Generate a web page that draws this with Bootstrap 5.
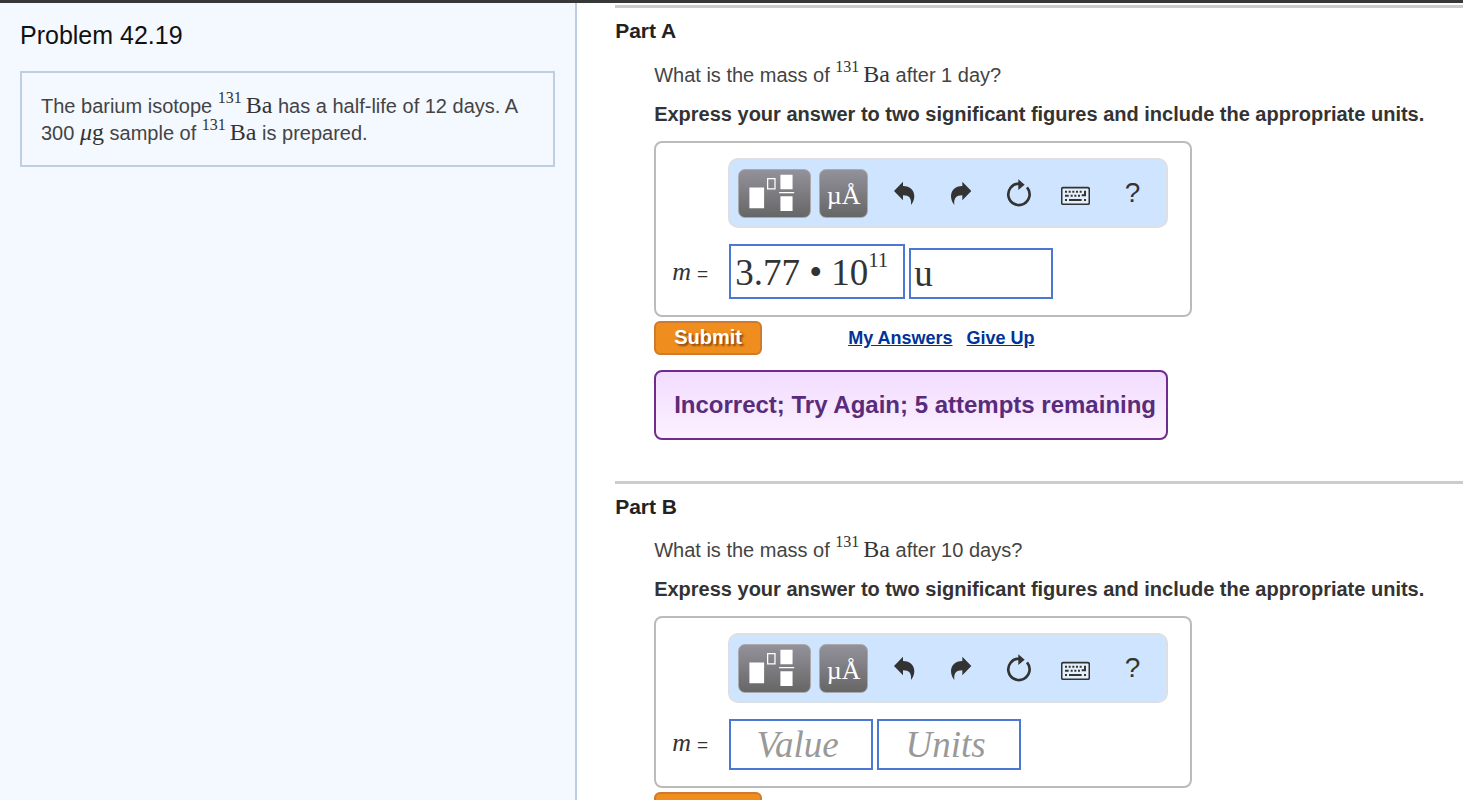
<!DOCTYPE html>
<html lang="en">
<head>
<meta charset="utf-8">
<meta name="viewport" content="width=device-width, initial-scale=1">
<title>Problem 42.19</title>
<link href="https://cdn.jsdelivr.net/npm/bootstrap@5.3.0/dist/css/bootstrap.min.css" rel="stylesheet">
<style>
body { font-family: "Liberation Sans", Arial, sans-serif; font-size: 20px; line-height: 24px; color: #444; background: #fff; }
.shell { border-top: 3px solid #383838; }
.problem-pane { flex: 0 0 auto; width: 39.45%; padding: 18px 20px; background: #f4f8ff; border-right: 2px solid #bccde0; }
.problem-pane h1 { font-size: 25px; line-height: 28px; font-weight: 400; color: #111; margin-bottom: 22px; }
.problem-box { border: 2px solid #bdcfe1; padding: 20px 20px 18px 19px; line-height: 27px; }
.parts-pane { min-width: 0; padding: 2px 0 0 38px; scrollbar-width: none; }
.part { border-top: 3px solid #ccc; padding-top: 11px; }
.part h2 { font-size: 21px; line-height: 24px; font-weight: 700; color: #222; margin-bottom: 20px; }
.part-body { padding-left: 39px; }
.part-body p { margin-bottom: 15px; }
.part-body .instruct { font-weight: 700; color: #333; }
.iso { font-family: "Liberation Serif", serif; font-size: 24px; line-height: 1px; color: #333; white-space: nowrap; }
.iso sup { font-size: 16px; line-height: 1px; top: 0; vertical-align: 10px; margin-right: 4px; }
.answer-box { max-width: 538px; border: 2px solid #bbb; border-radius: 8px; padding: 15px 22px 16px 16px; }
.tools { margin-left: 56px; height: 70px; padding-left: 8px; background: #cfe5ff; border: 2px solid #dcdfe4; border-radius: 10px; }
.tools button { border: 0; padding: 0; background: none; color: #333; height: 49px; }
.tools .btn-dark-tool { background: linear-gradient(#93929b, #666); border: 1px solid #aaa; border-radius: 7px; color: #fff; margin-right: 8px; }
.tools .wide { width: 73px; }
.tools .unit { width: 49px; font: 26px/26px "Liberation Serif", serif; padding-top: 6px; }
.tools .plain { width: 57px; font-size: 28px; line-height: 28px; }
.tools svg { display: block; margin: auto; }
.entry { margin-top: 16px; gap: 4px; }
.var-label { width: 53px; height: 51px; gap: 6px; font-size: 19px; color: #333; }
.var-label i { font: italic 26px/30px "Liberation Serif", serif; padding-bottom: 4px; }
.slot { border: 2px solid #4a78d2; height: 51px; width: 144px; padding: 0 10px 0 3px; border-radius: 0; background: #fff; color: #333; font: 37px/45px "Liberation Serif", serif; }
.slot::placeholder { color: #999; font-style: italic; text-align: center; opacity: 1; }
.slot.power { width: 176px; height: 55px; padding: 4px 0 0 4px; }
.power input { border: 0; padding: 0; background: none; color: inherit; font: inherit; min-width: 0; outline: 0; }
.power .base { width: 133px; }
.power .exponent { width: 30px; font-size: 21px; line-height: 20px; height: 20px; }
.submit { width: 108px; height: 34px; border: 2px solid #cf7a2c; border-radius: 6px; background: #ef8d1f; color: #fff; font-size: 20px; line-height: 24px; font-weight: 700; padding: 0 0 2px; text-shadow: 2px 2px 2px #8a4a10; }
.actions { margin-top: 4px; }
.actions a { color: #039; font-size: 18px; font-weight: 700; }
.links { margin-left: 86px; gap: 14px; }
.feedback { max-width: 514px; height: 70px; margin-top: 15px; padding-left: 18px; border: 2px solid #6f2c8d; border-radius: 8px; background: linear-gradient(#f2dcff, #fdf1ff); color: #582c7b; font-size: 24px; font-weight: 700; }
.part + .part { margin-top: 41px; }
.part + .part h2 { margin-bottom: 19px; }
</style>
</head>
<body>
<svg class="d-none" aria-hidden="true">
  <symbol id="template" viewBox="0 0 219 147"><path fill="#fff" d="M31 55h46v65H31zM128 15h38v45h-38zM124 69h47v4h-47zM128 82h38v46h-38z"/><path fill="none" stroke="#fff" stroke-width="4" d="M88 27h23v32H88z"/></symbol>
  <symbol id="undo" viewBox="0 0 63 75"><path fill="#333" d="M0 30 27 2v13c22 0 34 13 34 31 0 11-5 20-10 26 2-20-5-29-24-29v15z"/></symbol>
  <symbol id="redo" viewBox="0 0 63 75"><path fill="#333" d="M61 30 34 2v13C12 15 0 28 0 46c0 11 5 20 10 26-2-20 5-29 24-29v15z"/></symbol>
  <symbol id="reset" viewBox="0 0 78 84"><path fill="none" stroke="#333" stroke-width="8" d="M63 25A32 32 0 1 1 39 14"/><path fill="#333" d="M37 1 56 17 37 33z"/></symbol>
  <symbol id="keyboard" viewBox="0 0 87 72"><rect x="2" y="20" width="83" height="50" rx="5" fill="#e4effc" stroke="#333" stroke-width="5"/><path fill="#333" d="M12 29h6v6h-6zM23 29h6v6h-6zM34 29h6v6h-6zM45 29h6v6h-6zM56 29h6v6h-6zM69 29h6v17H62v-6h7zM12 41h11v6H12zM29 41h6v6h-6zM40 41h6v6h-6zM51 41h6v6h-6zM12 54h6v6h-6zM24 54h38v6H24zM69 54h6v6h-6z"/></symbol>
</svg>
<div class="shell d-flex vh-100 overflow-hidden">
  <aside class="problem-pane">
    <h1>Problem 42.19</h1>
    <div class="problem-box">The barium isotope <span class="iso"><sup>131</sup>Ba</span> has a half-life of 12 days. A 300 <span class="iso"><i>μ</i>g</span> sample of <span class="iso"><sup>131</sup>Ba</span> is prepared.</div>
  </aside>
  <main class="parts-pane flex-grow-1 overflow-auto">
    <section class="part">
      <h2>Part A</h2>
      <div class="part-body">
        <p>What is the mass of <span class="iso"><sup>131</sup>Ba</span> after 1 day?</p>
        <p class="instruct">Express your answer to two significant figures and include the appropriate units.</p>
        <div class="answer-box">
          <div class="tools d-flex align-items-center">
            <button type="button" class="btn-dark-tool wide" aria-label="Templates"><svg width="71" height="47"><use href="#template"/></svg></button>
            <button type="button" class="btn-dark-tool unit">µÅ</button>
            <button type="button" class="plain" aria-label="Undo"><svg width="21" height="25"><use href="#undo"/></svg></button>
            <button type="button" class="plain" aria-label="Redo"><svg width="21" height="25"><use href="#redo"/></svg></button>
            <button type="button" class="plain" aria-label="Reset"><svg width="26" height="28"><use href="#reset"/></svg></button>
            <button type="button" class="plain" aria-label="Keyboard"><svg width="29" height="24"><use href="#keyboard"/></svg></button>
            <button type="button" class="plain">?</button>
          </div>
          <div class="entry d-flex align-items-end">
            <label class="var-label d-flex align-items-center" for="valueA"><i>m</i> =</label>
            <div class="slot power d-flex align-items-start">
              <input class="base" id="valueA" type="text" value="3.77 • 10">
              <input class="exponent" type="text" value="11" aria-label="Exponent">
            </div>
            <input class="slot" type="text" value="u" aria-label="Units">
          </div>
        </div>
        <div class="actions d-flex align-items-center">
          <button type="button" class="submit">Submit</button>
          <div class="links d-flex"><a href="#">My Answers</a><a href="#">Give Up</a></div>
        </div>
        <div class="feedback d-flex align-items-center text-nowrap" role="status">Incorrect; Try Again; 5 attempts remaining</div>
      </div>
    </section>
    <section class="part">
      <h2>Part B</h2>
      <div class="part-body">
        <p>What is the mass of <span class="iso"><sup>131</sup>Ba</span> after 10 days?</p>
        <p class="instruct">Express your answer to two significant figures and include the appropriate units.</p>
        <div class="answer-box">
          <div class="tools d-flex align-items-center">
            <button type="button" class="btn-dark-tool wide" aria-label="Templates"><svg width="71" height="47"><use href="#template"/></svg></button>
            <button type="button" class="btn-dark-tool unit">µÅ</button>
            <button type="button" class="plain" aria-label="Undo"><svg width="21" height="25"><use href="#undo"/></svg></button>
            <button type="button" class="plain" aria-label="Redo"><svg width="21" height="25"><use href="#redo"/></svg></button>
            <button type="button" class="plain" aria-label="Reset"><svg width="26" height="28"><use href="#reset"/></svg></button>
            <button type="button" class="plain" aria-label="Keyboard"><svg width="29" height="24"><use href="#keyboard"/></svg></button>
            <button type="button" class="plain">?</button>
          </div>
          <div class="entry d-flex align-items-end">
            <label class="var-label d-flex align-items-center" for="valueB"><i>m</i> =</label>
            <input class="slot" id="valueB" type="text" placeholder="Value">
            <input class="slot" type="text" placeholder="Units" aria-label="Units">
          </div>
        </div>
        <div class="actions d-flex align-items-center">
          <button type="button" class="submit">Submit</button>
        </div>
      </div>
    </section>
  </main>
</div>
<script src="https://cdn.jsdelivr.net/npm/bootstrap@5.3.0/dist/js/bootstrap.bundle.min.js"></script>
</body>
</html>
